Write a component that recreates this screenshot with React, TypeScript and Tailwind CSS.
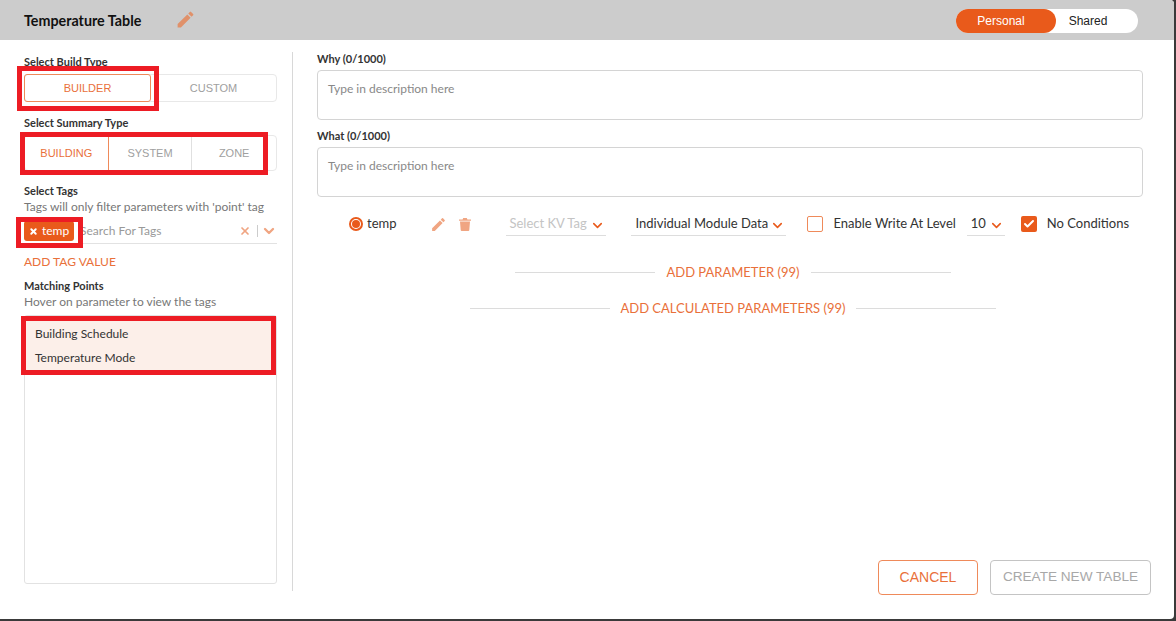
import { Check, ChevronDown, X } from 'lucide-react';

const lato = "font-['Lato',sans-serif]";
const arial = "font-['Liberation_Sans',sans-serif]";

function Caret() {
  return <ChevronDown className="w-[15px] h-[15px] mt-[3px] text-[#e95a1b]" strokeWidth={2.5} />;
}

function PencilIcon({ className = '' }: { className?: string }) {
  return (
    <svg viewBox="0 0 24 24" className={className} fill="currentColor">
      <path d="M3 17.25V21h3.75L17.81 9.94l-3.75-3.75L3 17.25zM20.71 7.04a1 1 0 0 0 0-1.41l-2.34-2.34a1 1 0 0 0-1.41 0l-1.83 1.83 3.75 3.75 1.83-1.83z" />
    </svg>
  );
}

function TrashIcon({ className = '' }: { className?: string }) {
  return (
    <svg viewBox="0 0 12 13" className={className} fill="currentColor">
      <path d="M1 3.6h10l-.7 8.4a1 1 0 0 1-1 1H2.7a1 1 0 0 1-1-1L1 3.6zM0 1.4h3.6L4.2 0h3.6l.6 1.4H12v1.4H0V1.4z" />
    </svg>
  );
}

function SideLabel({ children }: { children: string }) {
  return <div className="text-[11px] leading-[16px] font-bold text-[#333]">{children}</div>;
}

function DescriptionBox({ label }: { label: string }) {
  return (
    <div>
      <div className="text-[11px] leading-[16px] font-bold text-[#333]">{label}</div>
      <div className="mt-[3px] h-[50px] border border-[#d4d4d4] rounded-[4px] px-[10px] py-[9px] text-[12px] leading-[18px] text-[#888]">
        Type in description here
      </div>
    </div>
  );
}

export default function App() {
  return (
    <div className={`relative w-[1176px] h-[621px] overflow-hidden bg-[#3a3a3a] ${lato}`}>
      <div className="w-[1174px] h-[619px] bg-white rounded-br-[4px] rounded-tr-[4px] flex flex-col overflow-hidden">
        {/* Header */}
        <div className="h-10 bg-[#cccccc] flex items-center justify-between pl-6 pr-[36px] pt-[2px] shrink-0">
          <div className="flex items-center">
            <span className="text-[14.3px] font-bold text-[#111]">Temperature Table</span>
            <PencilIcon className="w-[21px] h-[21px] ml-[34px] -mt-[3px] text-[#e0916a]" />
          </div>
          <div className={`flex w-[182px] h-6 bg-white rounded-full text-[12px] ${arial}`}>
            <div className="w-[100px] bg-[#e95a1b] text-white rounded-full flex items-center justify-center pr-[10px]">Personal</div>
            <div className="w-[64px] text-[#222] flex items-center justify-center">Shared</div>
          </div>
        </div>

        <div className="flex-1 flex min-h-0">
          {/* Left column */}
          <div className="w-[293px] shrink-0 pl-6 pr-[15px] pt-[14px] pb-[35px]">
            <div className="h-full flex flex-col w-[253px]">
              <SideLabel>Select Build Type</SideLabel>
              <div className={`mt-[4px] flex h-7 border border-[#e8e8e8] rounded-[4px] text-[11px] ${arial}`}>
                <div className="w-[127px] -m-px mr-0 border border-[#ef8a5a] rounded-[3px] text-[#e9703a] flex items-center justify-center">BUILDER</div>
                <div className="flex-1 text-[#a0a0a0] flex items-center justify-center">CUSTOM</div>
              </div>
              <div className="mt-[13px]"><SideLabel>Select Summary Type</SideLabel></div>
              <div className={`mt-[4px] flex h-9 border border-[#e8e8e8] rounded-[4px] text-[11px] ${arial}`}>
                <div className="w-[84px] border-r border-[#ef8a5a] text-[#e9703a] flex items-center justify-center">BUILDING</div>
                <div className="w-[84px] border-r border-[#e0e0e0] text-[#a0a0a0] flex items-center justify-center">SYSTEM</div>
                <div className="w-[84px] text-[#a0a0a0] flex items-center justify-center">ZONE</div>
              </div>
              <div className="mt-3"><SideLabel>Select Tags</SideLabel></div>
              <div className="text-[12px] leading-[16px] text-[#777]">Tags will only filter parameters with 'point' tag</div>
              <div className="mt-[4px] h-[25px] flex items-center border-b border-[#e2e2e2]">
                <div className="h-5 w-[50px] bg-[#e95a1b] rounded-[3px] text-white text-[12px] flex items-center pl-[5px] gap-[4px]">
                  <X className="w-[9px] h-[9px]" strokeWidth={5} />
                  temp
                </div>
                <span className="ml-[6px] text-[12px] text-[#999]">Search For Tags</span>
                <X className="ml-auto w-3 h-3 text-[#f0a582]" strokeWidth={3.5} />
                <div className="w-px h-3 bg-[#ccc] ml-[6px]" />
                <ChevronDown className="w-4 h-4 ml-[3px] text-[#f0a582]" strokeWidth={3.5} />
              </div>
              <div className="mt-[10px] text-[12px] leading-[16px] text-[#e9703a]">ADD TAG VALUE</div>
              <div className="mt-[8px]"><SideLabel>Matching Points</SideLabel></div>
              <div className="text-[12px] leading-[16px] text-[#777]">Hover on parameter to view the tags</div>
              <div className="mt-[5px] flex-1 border border-[#e2e2e2] rounded-[3px] text-[12px] text-[#333]">
                <div className="bg-[#fcefe9] h-[50px] mt-[5px] pl-[10px] flex flex-col justify-center gap-[6px] leading-[18px]">
                  <div>Building Schedule</div>
                  <div>Temperature Mode</div>
                </div>
              </div>
            </div>
          </div>

          {/* Divider */}
          <div className="w-px bg-[#d8d8d8] mt-3 mb-7 shrink-0 -ml-px" />

          {/* Right column */}
          <div className="flex-1 flex flex-col pl-6 pr-[31px] pt-[11px] pb-[24px]">
            <div className="flex flex-col gap-[8px]">
              <DescriptionBox label="Why (0/1000)" />
              <DescriptionBox label="What (0/1000)" />
            </div>

            <div className="mt-[15px] h-6 flex items-center text-[13px] text-[#333]">
              <div className="ml-[32px] w-[14px] h-[14px] rounded-full border-2 border-[#e95a1b] flex items-center justify-center">
                <div className="w-2 h-2 rounded-full bg-[#e95a1b]" />
              </div>
              <span className="ml-[4px]">temp</span>
              <PencilIcon className="ml-[34px] w-[17px] h-[17px] text-[#f0a582]" />
              <TrashIcon className="ml-[12px] w-3 h-[13px] text-[#f0a582]" />
              <div className="ml-[35px] w-[100px] h-6 border-b border-[#ddd] flex items-center justify-between pl-[3px] pr-[1px] text-[#c4c4c4]">
                <span>Select KV Tag</span>
                <Caret />
              </div>
              <div className="ml-[25px] w-[155px] h-6 border-b border-[#ddd] flex items-center justify-between pl-[4px] pr-[1px]">
                <span>Individual Module Data</span>
                <Caret />
              </div>
              <div className="ml-[21px] w-4 h-4 border-[1.5px] border-[#ef8a5a] rounded-[2px]" />
              <span className="ml-[10px]">Enable Write At Level</span>
              <div className="ml-[11px] w-[38px] h-6 border-b border-[#ddd] flex items-center justify-between pr-[1px]">
                <span className="pl-[4px]">10</span>
                <Caret />
              </div>
              <div className="ml-[16px] w-4 h-4 bg-[#e95a1b] rounded-[2px] flex items-center justify-center">
                <Check className="w-3 h-3 text-white" strokeWidth={4} />
              </div>
              <span className="ml-[10px]">No Conditions</span>
            </div>

            <div className="mt-[27px] flex items-center justify-center text-[13px] text-[#e9703a] pl-[6px]">
              <div className="w-[140px] h-px bg-[#dcdcdc]" />
              <span className="mx-[11px]">ADD PARAMETER (99)</span>
              <div className="w-[140px] h-px bg-[#dcdcdc]" />
            </div>
            <div className="mt-[16px] flex items-center justify-center text-[13px] text-[#e9703a] pl-[6px]">
              <div className="w-[140px] h-px bg-[#dcdcdc]" />
              <span className="mx-[10px]">ADD CALCULATED PARAMETERS (99)</span>
              <div className="w-[140px] h-px bg-[#dcdcdc]" />
            </div>

            <div className={`mt-auto flex justify-end gap-[12px] -mr-[8px] ${arial}`}>
              <div className="w-[100px] h-[35px] border-[1.5px] border-[#ef8a5a] rounded-[4px] text-[14px] text-[#e9703a] flex items-center justify-center">CANCEL</div>
              <div className="w-[161px] h-[35px] border-[1.5px] border-[#c4c4c4] rounded-[4px] text-[13.6px] text-[#a8a8a8] flex items-center justify-center">CREATE NEW TABLE</div>
            </div>
          </div>
        </div>
      </div>

      {/* Red annotation boxes drawn on top of the screenshot */}
      <div className="absolute left-[17px] top-[66px] w-[142px] h-[45px] border-[5px] border-[#ed1c24]" />
      <div className="absolute left-[20px] top-[132px] w-[248px] h-[43px] border-[5px] border-[#ed1c24]" />
      <div className="absolute left-[16px] top-[217px] w-[67px] h-[31px] border-[5px] border-[#ed1c24]" />
      <div className="absolute left-[21px] top-[316px] w-[255px] h-[59px] border-[5px] border-[#ed1c24]" />
    </div>
  );
}
